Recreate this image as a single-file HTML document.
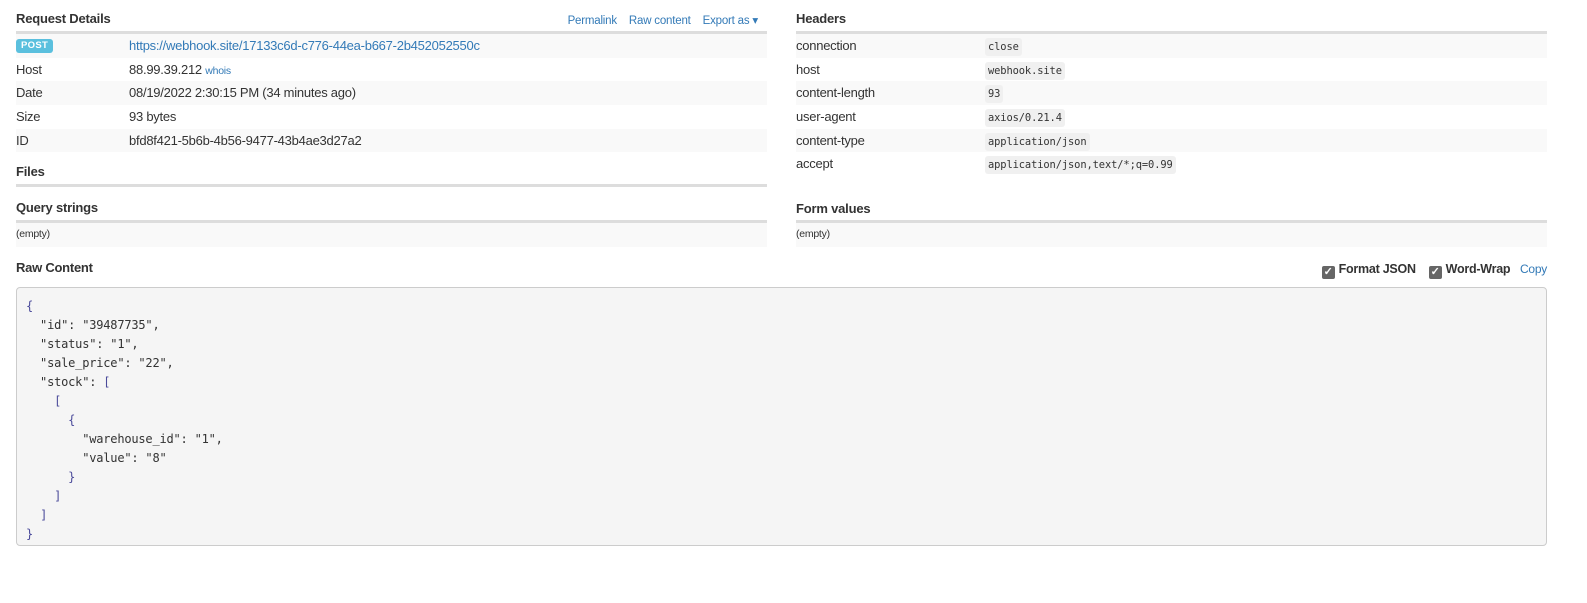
<!DOCTYPE html>
<html><head><meta charset="utf-8"><style>
*{box-sizing:border-box;margin:0;padding:0}
body{width:1587px;height:603px;background:#fff;font-family:"Liberation Sans",Arial,sans-serif;font-size:13px;letter-spacing:-0.25px;color:#333;position:relative;overflow:hidden}
.col{position:absolute;top:0;width:751px}
.h{font-weight:bold;font-size:13px;letter-spacing:-0.2px;height:34px;padding-top:11px;border-bottom:3px solid #ddd;position:relative}
.row{height:23.7px;line-height:23.7px;position:relative;white-space:nowrap}
.row.s{background:#f9f9f9}
.row .v{position:absolute;top:0}
a{color:#337ab7;text-decoration:none}
.links{position:absolute;right:9px;top:13px;font-size:11.5px;font-weight:normal;letter-spacing:-0.2px}
.links a{margin-left:12px}
.badge{display:inline-block;background:#5bc0de;color:#fff;font-size:9.5px;font-weight:bold;padding:0 5px;height:14px;line-height:14px;border-radius:3px;vertical-align:middle;margin-top:-2px;letter-spacing:0.3px}
code{font-family:"DejaVu Sans Mono","Liberation Mono",monospace;font-size:10.4px;letter-spacing:-0.1px;background:#f0f0f0;border-radius:3px;padding:3px 3px;color:#333}
.empty{font-size:10.5px}
pre{position:absolute;left:16px;top:287px;width:1531px;height:259px;background:#f5f5f5;border:1px solid #ccc;border-radius:4px;padding:9px 9px;font-family:"DejaVu Sans Mono","Liberation Mono",monospace;font-size:12px;line-height:19px;color:#333;letter-spacing:-0.2px}
.b{color:#4a4a9a}
.cb{display:inline-block;width:13px;height:13px;background:#666;border-radius:2px;vertical-align:-2px;margin-right:4px;color:#fff;font-size:11px;line-height:13px;text-align:center}
</style></head><body>
<div class="col" style="left:16px">
<div class="h">Request Details<div class="links"><a>Permalink</a><a>Raw content</a><a>Export as &#9662;</a></div></div>
<div class="row s"><span class="badge">POST</span><span class="v" style="left:113px"><a>https://webhook.site/17133c6d-c776-44ea-b667-2b452052550c</a></span></div>
<div class="row">Host<span class="v" style="left:113px">88.99.39.212 <a style="font-size:10.5px">whois</a></span></div>
<div class="row s">Date<span class="v" style="left:113px">08/19/2022 2:30:15 PM (34 minutes ago)</span></div>
<div class="row">Size<span class="v" style="left:113px">93 bytes</span></div>
<div class="row s">ID<span class="v" style="left:113px">bfd8f421-5b6b-4b56-9477-43b4ae3d27a2</span></div>
<div class="h" style="height:35px;padding-top:12px">Files</div>
<div class="h" style="height:36px;padding-top:13px">Query strings</div>
<div class="row s empty">(empty)</div>
</div>
<div class="col" style="left:796px">
<div class="h">Headers</div>
<div class="row s">connection<span class="v" style="left:189px"><code>close</code></span></div>
<div class="row">host<span class="v" style="left:189px"><code>webhook.site</code></span></div>
<div class="row s">content-length<span class="v" style="left:189px"><code>93</code></span></div>
<div class="row">user-agent<span class="v" style="left:189px"><code>axios/0.21.4</code></span></div>
<div class="row s">content-type<span class="v" style="left:189px"><code>application/json</code></span></div>
<div class="row">accept<span class="v" style="left:189px"><code>application/json,text/*;q=0.99</code></span></div>
<div class="h" style="position:absolute;top:188px;width:751px;height:35px;padding-top:13px">Form values</div>
<div class="row s empty" style="position:absolute;top:223px;width:751px">(empty)</div>
</div>
<div style="position:absolute;left:16px;top:260px;font-weight:bold">Raw Content</div>
<div style="position:absolute;right:40px;top:262px;font-size:12.5px;font-weight:bold;white-space:nowrap"><span class="cb">&#10003;</span>Format JSON &nbsp;&nbsp; <span class="cb">&#10003;</span>Word-Wrap &nbsp;&nbsp;<a style="font-weight:normal;font-size:12px">Copy</a></div>
<pre><span class="b">{</span>
  "id": "39487735",
  "status": "1",
  "sale_price": "22",
  "stock": <span class="b">[</span>
    <span class="b">[</span>
      <span class="b">{</span>
        "warehouse_id": "1",
        "value": "8"
      <span class="b">}</span>
    <span class="b">]</span>
  <span class="b">]</span>
<span class="b">}</span></pre>
</body></html>
